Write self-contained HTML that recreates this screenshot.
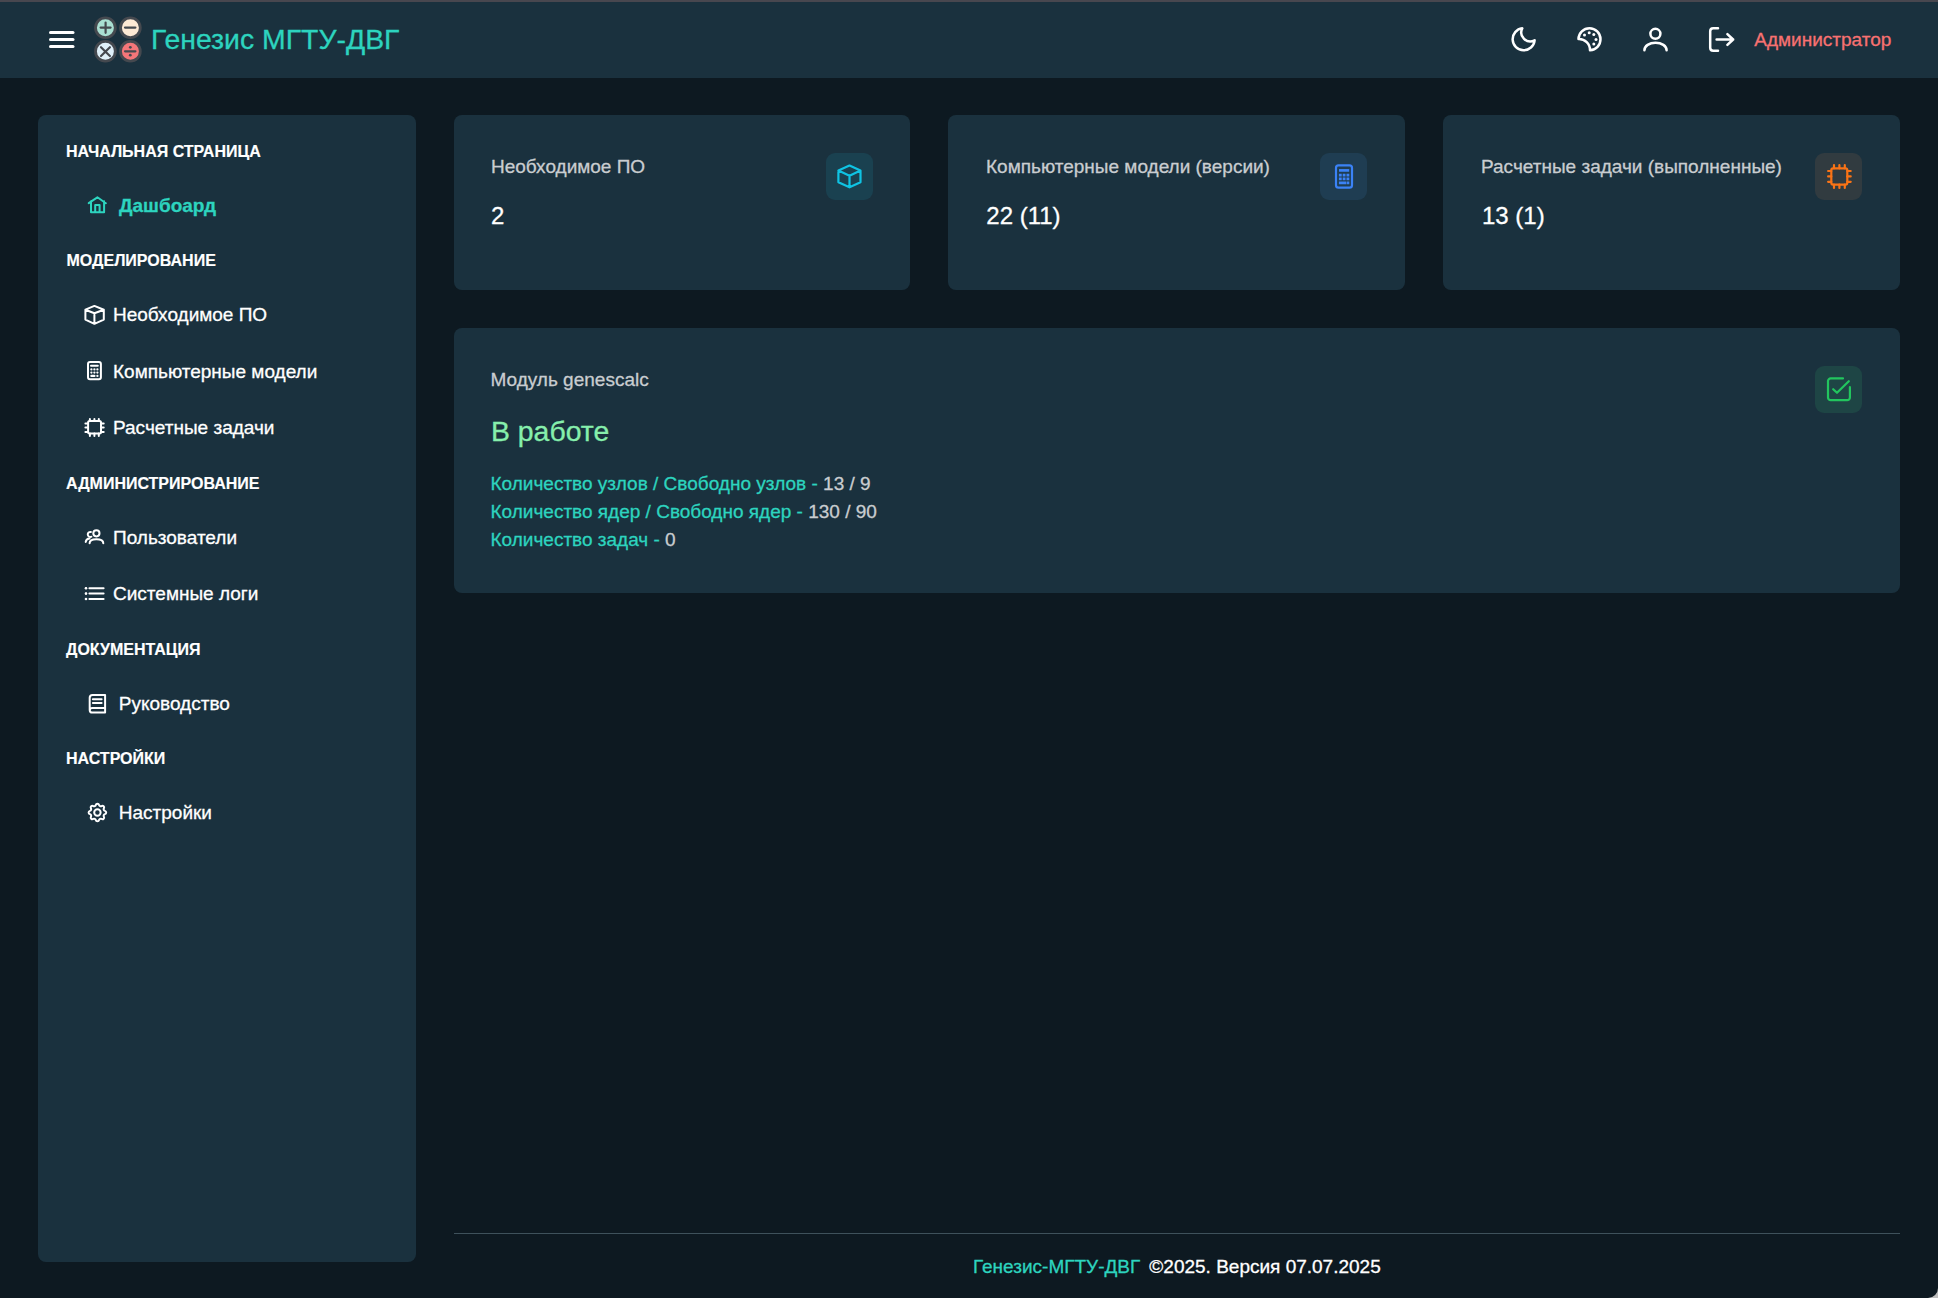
<!DOCTYPE html>
<html>
<head>
<meta charset="utf-8">
<style>
html,body{margin:0;padding:0;}
body{width:1938px;height:1298px;background:#0d1921;position:relative;overflow:hidden;font-family:"Liberation Sans",sans-serif;}
.a{position:absolute;white-space:nowrap;line-height:1;-webkit-text-stroke:0.3px currentColor;}
.sec{-webkit-text-stroke:0.15px currentColor;}
#top{position:absolute;left:0;top:0;width:1938px;height:2px;background:#48474f;}
#hdr{position:absolute;left:0;top:2px;width:1938px;height:76px;background:#1a313e;}
.card{position:absolute;background:#1a313e;border-radius:8px;}
.ibox{position:absolute;width:47px;height:47px;border-radius:9px;}
svg{position:absolute;overflow:visible;}
.sec{font-size:16px;font-weight:700;color:#ffffff;}
.itm{font-size:19px;color:#ffffff;}
.ttl{font-size:19px;color:#c9cdd0;}
.num{font-size:24px;color:#ffffff;}
.tl{color:#2dd4bf;}
.gr{color:#c9cdd0;}
</style>
</head>
<body>
<div id="top"></div>
<div id="hdr"></div>

<!-- hamburger -->
<svg style="left:0;top:0" width="1" height="1">
  <g stroke="#ffffff" stroke-width="3" stroke-linecap="round">
    <line x1="50.5" y1="32.4" x2="73" y2="32.4"/>
    <line x1="50.5" y1="39.4" x2="73" y2="39.4"/>
    <line x1="50.5" y1="46.4" x2="73" y2="46.4"/>
  </g>
</svg>

<!-- logo -->
<svg style="left:0;top:0" width="1" height="1">
  <g stroke="#45494f" stroke-width="2.8">
    <circle cx="105.4" cy="27.8" r="9.9" fill="#a9dfd2"/>
    <circle cx="130.4" cy="27.8" r="9.9" fill="#fde9d4"/>
    <circle cx="105.4" cy="51.3" r="9.9" fill="#dff0f9"/>
    <circle cx="130.4" cy="51.3" r="9.9" fill="#f47679"/>
  </g>
  <g stroke="#45494f" stroke-width="2.2" stroke-linecap="round" fill="none">
    <path d="M100.6 27.6H110.6M105.6 22.6V32.8"/>
    <path d="M125 27.6H135.4"/>
    <path d="M101 47.2L109.9 56M109.9 47.2L101 56"/>
    <path d="M125 51.3H135.4"/>
  </g>
  <g fill="#45494f">
    <circle cx="130.3" cy="47.3" r="1.4"/>
    <circle cx="130.3" cy="55.2" r="1.4"/>
  </g>
</svg>
<div class="a tl" style="left:151px;top:25.2px;font-size:28.4px;">Генезис МГТУ-ДВГ</div>

<!-- header right icons -->
<svg style="left:0;top:0" width="1" height="1">
  <g stroke="#ffffff" stroke-width="2.5" stroke-linecap="round" stroke-linejoin="round" fill="none">
    <!-- moon -->
    <path d="M1522.3 28.3A11 11 0 1 0 1534.6 40.3A9 9 0 0 1 1522.3 28.3Z"/>
    <!-- palette -->
    <path d="M1578.5 39A11 11 0 1 1 1590 50.3A11 11 0 0 0 1578.5 39Z"/>
    <!-- user -->
    <circle cx="1655.4" cy="33.8" r="5"/>
    <path d="M1644.4 50.2A11 7.5 0 0 1 1666.6 50.2"/>
    <!-- logout -->
    <path d="M1718 28.2H1713.2Q1710.2 28.2 1710.2 31.2V47.8Q1710.2 50.8 1713.2 50.8H1718"/>
    <path d="M1716.6 39.5H1733.2M1727.4 34.1L1733.1 39.5L1727.4 44.9"/>
  </g>
  <g fill="#ffffff">
    <circle cx="1584.5" cy="34.9" r="1.5"/>
    <circle cx="1589.2" cy="32.7" r="1.5"/>
    <circle cx="1593.8" cy="34.6" r="1.5"/>
    <circle cx="1596" cy="39.5" r="1.5"/>
    <circle cx="1593.8" cy="44.1" r="1.5"/>
  </g>
</svg>
<div class="a" style="left:1754.3px;top:30px;font-size:19px;color:#f87171;">Администратор</div>

<!-- sidebar -->
<div class="card" style="left:38px;top:115px;width:378px;height:1147px;"></div>
<div class="a sec" style="left:66px;top:144px;">НАЧАЛЬНАЯ СТРАНИЦА</div>
<div class="a" style="left:119px;top:195.7px;font-size:19px;font-weight:700;color:#2dd4bf;">Дашбоард</div>
<div class="a sec" style="left:66.5px;top:253.4px;">МОДЕЛИРОВАНИЕ</div>
<div class="a itm" style="left:113px;top:305.1px;">Необходимое ПО</div>
<div class="a itm" style="left:113px;top:361.8px;">Компьютерные модели</div>
<div class="a itm" style="left:113px;top:417.5px;">Расчетные задачи</div>
<div class="a sec" style="left:66px;top:476px;">АДМИНИСТРИРОВАНИЕ</div>
<div class="a itm" style="left:113px;top:527.5px;">Пользователи</div>
<div class="a itm" style="left:113px;top:583.8px;">Системные логи</div>
<div class="a sec" style="left:66px;top:641.7px;">ДОКУМЕНТАЦИЯ</div>
<div class="a itm" style="left:118.8px;top:694px;">Руководство</div>
<div class="a sec" style="left:66px;top:751px;">НАСТРОЙКИ</div>
<div class="a itm" style="left:118.8px;top:802.5px;">Настройки</div>

<!-- sidebar icons -->
<svg style="left:0;top:0" width="1" height="1">
  <g stroke="#2dd4bf" stroke-width="2" stroke-linecap="round" stroke-linejoin="round" fill="none">
    <path d="M88.7 203.2L97.4 197.3L105.9 203.2M91 201.3V212.2H104.1V201.3M95.2 212.2V205H99.6V212.2"/>
  </g>
  <g stroke="#ffffff" stroke-width="2" stroke-linecap="round" stroke-linejoin="round" fill="none">
    <!-- cube -->
    <path d="M94.4 305.9L103.8 309.7V319.6L94.4 323.8L85.4 319.6V309.7Z M85.4 309.7L94.4 313.2L103.8 309.7 M94.4 313.2V323.8"/>
    <!-- calculator -->
    <rect x="88" y="361.9" width="12.9" height="17.4" rx="2"/>
    <path d="M91 365.8H97.8"/><path stroke-width="2.3" d="M91.4 369.4h.01 M94.4 369.4h.01 M97.4 369.4h.01 M91.4 372.6h.01 M94.4 372.6h.01 M97.4 372.6h.01 M91.4 375.9H94.4 M97.4 375.9h.01"/>
    <!-- chip -->
    <rect x="88.1" y="421.1" width="12.9" height="12.3" rx="1.5"/>
    <path d="M89.9 419V421 M94.4 419V421 M98.8 419V421 M89.9 433.5V436 M94.4 433.5V436 M98.8 433.5V436 M85.4 423.4H88 M85.4 427.5H88 M85.4 431.9H88 M101 423.4H103.7 M101 427.5H103.7 M101 431.9H103.7"/>
    <!-- users -->
    <circle cx="96.4" cy="533.3" r="3.1"/>
    <path d="M91.4 536.7A2.5 2.5 0 1 1 90.9 532.05"/>
    <path d="M89.6 543.3Q89.6 539.3 96.4 539.3Q103.3 539.3 103.3 543.3"/>
    <path d="M85.7 541.9Q86.2 538.8 89.5 538.6"/>
    <!-- list -->
    <path d="M89.4 588.2H103.6 M89.4 593.6H103.6 M89.4 599H103.6 M86 588.2h.01 M86 593.6h.01 M86 599h.01"/>
    <!-- book -->
    <path d="M105.1 694.9H92.5A2.8 2.8 0 0 0 89.7 697.7V709.9A2.6 2.6 0 0 0 92.3 712.5H105.1Z M105.1 707.9H92.2A2.4 2.4 0 0 0 89.8 710.3 M92.9 699.3H101.6 M92.9 703.1H101.6"/>
    <!-- gear -->
    <g transform="translate(85.7 800.8) scale(0.976)">
      <path d="M10.325 4.317c.426 -1.756 2.924 -1.756 3.35 0a1.724 1.724 0 0 0 2.573 1.066c1.543 -.94 3.31 .826 2.37 2.37a1.724 1.724 0 0 0 1.065 2.572c1.756 .426 1.756 2.924 0 3.35a1.724 1.724 0 0 0 -1.066 2.573c.94 1.543 -.826 3.31 -2.37 2.37a1.724 1.724 0 0 0 -2.572 1.065c-.426 1.756 -2.924 1.756 -3.35 0a1.724 1.724 0 0 0 -2.573 -1.066c-1.543 .94 -3.31 -.826 -2.37 -2.37a1.724 1.724 0 0 0 -1.065 -2.572c-1.756 -.426 -1.756 -2.924 0 -3.35a1.724 1.724 0 0 0 1.066 -2.573c-.94 -1.543 .826 -3.31 2.37 -2.37c1 .608 2.296 .07 2.572 -1.065z" stroke-width="2.05"/>
      <circle cx="12" cy="12" r="3.3" stroke-width="2.05"/>
    </g>
  </g>
  <g fill="#ffffff">
    <circle cx="86" cy="588.2" r="1.3"/>
    <circle cx="86" cy="593.6" r="1.3"/>
    <circle cx="86" cy="599" r="1.3"/>
  </g>
</svg>

<!-- stat cards -->
<div class="card" style="left:454px;top:115px;width:456px;height:175px;"></div>
<div class="card" style="left:948px;top:115px;width:457px;height:175px;"></div>
<div class="card" style="left:1443px;top:115px;width:457px;height:175px;"></div>

<div class="a ttl" style="left:491px;top:156.8px;">Необходимое ПО</div>
<div class="a num" style="left:491px;top:203.8px;">2</div>
<div class="ibox" style="left:826px;top:153px;background:#1a4150;"></div>

<div class="a ttl" style="left:986px;top:156.8px;">Компьютерные модели (версии)</div>
<div class="a num" style="left:986.3px;top:204px;">22 (11)</div>
<div class="ibox" style="left:1320px;top:153px;background:#1f3d52;"></div>

<div class="a ttl" style="left:1481px;top:156.8px;">Расчетные задачи (выполненные)</div>
<div class="a num" style="left:1482px;top:204px;">13 (1)</div>
<div class="ibox" style="left:1815px;top:153px;background:#313b40;"></div>

<!-- big card -->
<div class="card" style="left:454px;top:328px;width:1446px;height:265px;"></div>
<div class="a ttl" style="left:490.5px;top:369.8px;">Модуль genescalc</div>
<div class="a" style="left:491px;top:416.6px;font-size:28.4px;color:#86efac;">В работе</div>
<div class="a" style="left:490.5px;top:474.2px;font-size:19px;"><span class="tl">Количество узлов / Свободно узлов - </span><span class="gr">13 / 9</span></div>
<div class="a" style="left:490.5px;top:502.2px;font-size:19px;"><span class="tl">Количество ядер / Свободно ядер - </span><span class="gr">130 / 90</span></div>
<div class="a" style="left:490.5px;top:530.2px;font-size:19px;"><span class="tl">Количество задач - </span><span class="gr">0</span></div>
<div class="ibox" style="left:1815px;top:366px;background:#1e4545;"></div>

<!-- card icons -->
<svg style="left:0;top:0" width="1" height="1">
  <g stroke-width="2.2" stroke-linecap="round" stroke-linejoin="round" fill="none">
    <path stroke="#0fc3e3" d="M849.5 165.5L860.5 170.6V182.2L849.5 187.3L838.4 182.2V170.6Z M838.4 170.6L849.5 175.7L860.5 170.6 M849.5 175.7V187.3"/>
    <g stroke="#3b82f6">
      <rect x="1336" y="165.4" width="16" height="22.3" rx="2.5"/>
      <path d="M1339 170.4H1349.2" stroke-width="2.7" stroke-linecap="butt"/>
      <path d="M1340.3 175.1h.01 M1344.1 175.1h.01 M1347.9 175.1h.01 M1340.3 178.8h.01 M1344.1 178.8h.01 M1347.9 178.8h.01 M1340.3 182.9H1344.6 M1347.9 182.9h.01" stroke-width="2.8" stroke-linecap="square"/>
    </g>
    <g stroke="#f97316">
      <rect x="1831.3" y="168.3" width="16" height="16.3" rx="1.8"/>
      <path d="M1834 165.2V168.3 M1839.4 165.2V168.3 M1844.8 165.2V168.3 M1834 184.6V188 M1839.4 184.6V188 M1844.8 184.6V188 M1828.1 171H1831.3 M1828.1 176.4H1831.3 M1828.1 181.8H1831.3 M1847.3 171H1850.7 M1847.3 176.4H1850.7 M1847.3 181.8H1850.7"/>
    </g>
    <path stroke="#22c55e" d="M1843 378.4H1830.7A2.7 2.7 0 0 0 1828 381.1V397.5A2.7 2.7 0 0 0 1830.7 400.2H1847.2A2.7 2.7 0 0 0 1849.9 397.5V387.2 M1833.2 389.2L1837 392.8L1848.8 381.2"/>
  </g>
</svg>

<!-- footer -->
<div style="position:absolute;left:454px;top:1233px;width:1446px;height:1px;background:#3e515b;"></div>
<div class="a" style="left:973px;top:1256.5px;font-size:19px;"><span class="tl">Генезис-МГТУ-ДВГ</span><span style="color:#ffffff;margin-left:9px;">©2025. Версия 07.07.2025</span></div>

<div style="position:absolute;left:1918px;top:1278px;width:20px;height:20px;background:#bdbdbd;"><div style="width:20px;height:20px;background:#0d1921;border-bottom-right-radius:10px;"></div></div>
</body>
</html>
